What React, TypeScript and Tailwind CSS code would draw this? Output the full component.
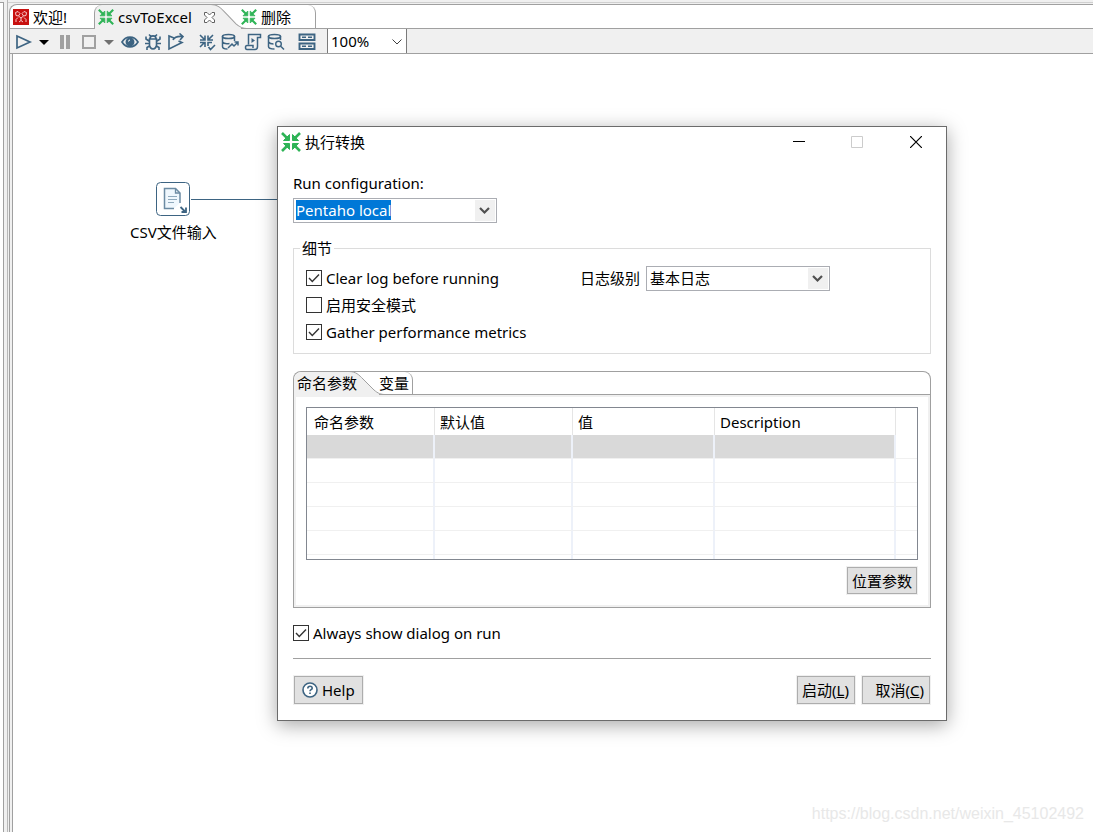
import { useState } from 'react';
import type { ReactNode } from 'react';

const COLUMNS = ['命名参数', '默认值', '值', 'Description'];
const ROWS = [0, 1, 2, 3, 4];

function TransIcon({ className, color = '#2fb457' }: { className: string; color?: string }) {
  return (
    <svg viewBox="0 0 20 20" className={className} fill={color} stroke={color} strokeWidth="2.600" aria-hidden="true">
      <path d="M1 1l6 6M19 1l-6 6M1 19l6-6M19 19l-6-6" fill="none" />
      <path d="M8.500 2.500v6h-6zM11.500 2.500v6h6zM8.500 17.500v-6h-6zM11.500 17.500v-6h6z" strokeWidth="1" />
    </svg>
  );
}

function Icon({ children }: { children: ReactNode }) {
  return (
    <svg viewBox="0 0 18 18" className="size-[18px]" fill="none" stroke="#3d6482" strokeWidth="1.7" aria-hidden="true">
      {children}
    </svg>
  );
}

function ToolButton({ label, className = 'w-[23px]', children }: { label: string; className?: string; children: ReactNode }) {
  return (
    <button type="button" aria-label={label} className={`flex h-6 shrink-0 items-center justify-center pt-0.5 ${className}`}>
      {children}
    </button>
  );
}

// sloped right edge of the selected tab
function TabCurve({ className }: { className: string }) {
  return (
    <svg viewBox="0 0 36 24" preserveAspectRatio="none" className={`-mt-px w-9 shrink-0 ${className}`} aria-hidden="true">
      <path d="M0 0H36V24H0z" fill="#f0f0f0" />
      <path d="M0 .5C7 .5 10 4 14 8L25 19C29 22.500 32 23.500 36 23.500V0H0z" fill="#fff" />
      <path d="M0 .5H36M0 .5C7 .5 10 4 14 8L25 19C29 22.500 32 23.500 36 23.500" fill="none" stroke="#a0a0a0" />
    </svg>
  );
}

function Check({ label, defaultChecked = false }: { label: string; defaultChecked?: boolean }) {
  return (
    <label className="flex w-fit items-center gap-1 leading-5">
      <span className="grid size-4 shrink-0">
        <input
          type="checkbox"
          defaultChecked={defaultChecked}
          className="peer col-start-1 row-start-1 size-4 appearance-none border border-[#333] bg-white"
        />
        <svg
          viewBox="0 0 16 16"
          className="pointer-events-none invisible col-start-1 row-start-1 size-4 peer-checked:visible"
          fill="none"
          stroke="#333"
          strokeWidth="1.4"
          aria-hidden="true"
        >
          <path d="M3 8l3.300 3.500L13 4.500" />
        </svg>
      </span>
      {label}
    </label>
  );
}

function Chevron() {
  return (
    <svg viewBox="0 0 20 21" className="h-[21px] w-5 bg-[#f0f0f0]" fill="none" stroke="#505050" strokeWidth="2.200" aria-hidden="true">
      <path d="M5 8l4.500 4.500L14 8" />
    </svg>
  );
}

function PushButton({ className, children, onClick }: { className: string; children: ReactNode; onClick?: () => void }) {
  return (
    <button
      type="button"
      onClick={onClick}
      className={`flex items-center border border-[#adadad] bg-[#e1e1e1] leading-5 whitespace-nowrap outline outline-[#f0f0f0] ${className}`}
    >
      {children}
    </button>
  );
}

function EditorTabs() {
  return (
    <div role="tablist" className="flex h-[25px] rounded-tl-lg border-t border-l border-[#a0a0a0] bg-white leading-5">
      <button role="tab" type="button" className="flex w-[84px] shrink-0 items-center gap-1 border-b border-[#a0a0a0] pl-[3px]">
        <svg viewBox="0 0 16 16" className="size-4" fill="none" stroke="#f7c9c9" strokeWidth="1" aria-hidden="true">
          <path d="M0 0h16v16H0z" fill="#c8100f" stroke="none" />
          <path d="M2.500 3.500L5 2.500l2 2-1.500 2.500-2.500-.5zM13.500 3.500L11 2.500l-2 2 1.500 2.500 2.500-.5zM5.500 7L8 9l2.500-2M8 9v2.500M5 8.500l-2 2v2.500M11 8.500l2 2v2.500M6 13l2-1.500L10 13" />
        </svg>
        欢迎!
      </button>
      <div role="tab" aria-selected="true" className="flex shrink-0 items-center rounded-tl-lg border-l border-[#a0a0a0] bg-[#f0f0f0] pl-[3px]">
        <TransIcon className="mr-1 size-4" />
        csvToExcel
        <button type="button" aria-label="Close" className="relative z-10 ml-3">
          <svg viewBox="0 0 11 11" className="size-[11px]" fill="#fff" stroke="#606060" strokeWidth="1" aria-hidden="true">
            <path d="M.5 .5h2.500L5.500 3 8 .5h2.500V3L8 5.500 10.500 8v2.500H8L5.500 8 3 10.500H.5V8L3 5.500.5 3z" />
          </svg>
        </button>
      </div>
      <TabCurve className="-ml-1 h-[25px]" />
      <button role="tab" type="button" className="-ml-1.5 flex shrink-0 items-center gap-1 rounded-tr-lg border-r border-b border-[#a0a0a0] pr-6">
        <TransIcon className="size-4" />
        删除
      </button>
      <div className="flex-1 border-b border-[#a0a0a0]" />
    </div>
  );
}

function Toolbar() {
  return (
    <div role="toolbar" className="flex h-[25px] items-center border-b border-[#a0a0a0] pl-[3px]">
      <ToolButton label="Run" className="w-[22px]">
        <Icon><path d="M2 3l13 6-13 6z" /></Icon>
      </ToolButton>
      <ToolButton label="Run options" className="w-[18px]">
        <svg viewBox="0 0 10 5" className="h-[5px] w-2.5" aria-hidden="true"><path d="M0 0h10L5 5z" /></svg>
      </ToolButton>
      <ToolButton label="Pause" className="w-6">
        <svg viewBox="0 0 10 14" className="h-3.5 w-2.5" fill="#a0a0a0" aria-hidden="true"><path d="M0 0h4v14H0zM6 0h4v14H6z" /></svg>
      </ToolButton>
      <ToolButton label="Stop" className="w-6">
        <svg viewBox="0 0 14 14" className="size-3.5" fill="none" stroke="#a0a0a0" strokeWidth="2" aria-hidden="true"><path d="M1 1h12v12H1z" /></svg>
      </ToolButton>
      <ToolButton label="Stop options" className="w-4">
        <svg viewBox="0 0 10 5" className="h-[5px] w-2.5" fill="#707070" aria-hidden="true"><path d="M0 0h10L5 5z" /></svg>
      </ToolButton>
      <ToolButton label="Preview" className="ml-px w-[23px]">
        <Icon>
          <path d="M1 9c4-6.500 12-6.500 16 0-4 6.500-12 6.500-16 0z" />
          <circle cx="9" cy="9" r="3.600" fill="#3d6482" />
          <path d="M7.500 8.500q0-1.500 1.500-1.500" stroke="#fff" strokeWidth="1" />
        </Icon>
      </ToolButton>
      <ToolButton label="Debug">
        <Icon>
          <path d="M5.500 6h7v6.500Q12 15.500 9 16q-3-.5-3.500-3.500zM6 5.500C6 2 12 2 12 5.500M5 1.500l2 2M13 1.500l-2 2M5 8L2 6V3.500M13 8l3-2V3.500M5 10.500H1M13 10.500h4M5.500 13L3 14.500V17M12.500 13l2.500 1.500V17" strokeWidth="1.600" />
        </Icon>
      </ToolButton>
      <ToolButton label="Replay">
        <Icon>
          <path d="M7 5L2 3v13l13-6.500L11.500 8M6 7c1.500-3 4-4 9.500-3.500M12.500.5l3.500 3L13 7" strokeWidth="1.600" />
        </Icon>
      </ToolButton>
      <ToolButton label="Verify" className="ml-2 w-[23px]">
        <Icon>
          <path d="M2 2l4.500 4.500M15 2l-4.500 4.500M2 14l4.500-4.500M7 2.500V7H2M10 2.500V7h5M7 14V9.500H2M10 13V9.500h4M10.500 14l2 2.500 4.500-4.500" strokeWidth="1.600" />
        </Icon>
      </ToolButton>
      <ToolButton label="Impact">
        <Icon>
          <ellipse cx="7.500" cy="3.500" rx="6" ry="2" />
          <path d="M1.500 3.500v10c0 1.500 2 2.500 5 2.500M13.500 3.500V8M1.500 9c1 1.500 4 2 7 1.500M7 15l4-4 2 2 4-4M13.500 9H17v3.500" strokeWidth="1.500" />
        </Icon>
      </ToolButton>
      <ToolButton label="SQL">
        <Icon>
          <path d="M4.500 11.500v-10h12v3h-3v9c0 2-1 3-2.500 3H3c-2 0-2-4 0-4h6v2.500" strokeWidth="1.500" />
          <path d="M7.500 5l3.500 2.500-3.500 2.500z" fill="#3d6482" stroke="none" />
        </Icon>
      </ToolButton>
      <ToolButton label="Explore database">
        <Icon>
          <ellipse cx="7.500" cy="3.500" rx="6" ry="2" />
          <path d="M1.500 3.500v10c0 1.500 2 2.500 6 2.500M13.500 3.500V7M1.500 9c1 1.500 3 2 5 2M14 13.500l3 3" strokeWidth="1.500" />
          <circle cx="11.500" cy="11" r="2.800" strokeWidth="1.400" />
        </Icon>
      </ToolButton>
      <ToolButton label="Show results" className="ml-2 w-[23px]">
        <Icon>
          <path d="M1.500 1.500h15v5.500h-15zM1.500 10.500h15v5.500h-15z" strokeWidth="1.900" />
          <path d="M4 4.300h4M10 4.300h4M4 13.300h4M10 13.300h4" strokeWidth="1.400" />
        </Icon>
      </ToolButton>
      <div className="ml-[9px] grid h-6 w-20 items-center border-x border-[#7a7a7a] bg-white">
        <select aria-label="Zoom" className="col-start-1 row-start-1 h-6 appearance-none pl-[3px] leading-5">
          <option>100%</option>
        </select>
        <svg viewBox="0 0 10 6" className="pointer-events-none col-start-1 row-start-1 mt-0.5 mr-1 h-1.5 w-2.5 justify-self-end" fill="none" stroke="#404040" aria-hidden="true">
          <path d="M.5 .5L5 5 9.500.5" />
        </svg>
      </div>
    </div>
  );
}

function Canvas() {
  return (
    <div className="relative ml-0.5 flex-1 border-l border-[#a0a0a0] bg-white">
      <div className="absolute top-[145px] left-[178px] h-px w-[200px] bg-[#3d6482]" />
      <div className="absolute top-32 left-[117px] flex flex-col items-center gap-1.5">
        <svg viewBox="0 0 34 34" className="size-[34px]" fill="none" stroke="#3d6482" aria-hidden="true">
          <rect x=".5" y=".5" width="33" height="33" rx="4" fill="#fff" />
          <path d="M18 26.500H8.500v-20h11L24 11v10" fill="#eff7fd" stroke="#6c8ba3" strokeWidth="1.500" />
          <path d="M19.500 6.500V11H24" stroke="#6c8ba3" strokeWidth="1.300" />
          <path d="M12 14.500h9M12 17.500h9M12 20.500h6" stroke="#8fa9bc" />
          <path d="M24.500 25l5 5M30 25.500V30h-4.500" strokeWidth="1.800" />
        </svg>
        <span className="leading-5">CSV文件输入</span>
      </div>
      <span className="absolute right-[9px] bottom-2 font-['Liberation_Sans',Arial,sans-serif] text-base leading-5 text-[#e8e8e8]">
        https://blog.csdn.net/weixin_45102492
      </span>
    </div>
  );
}

function ParameterTable() {
  return (
    <div className="border border-[#828790] bg-white">
      <table className="w-full table-fixed border-separate border-spacing-0 text-left">
        <colgroup>
          <col className="w-[128px]" />
          <col className="w-[138px]" />
          <col className="w-[142px]" />
          <col className="w-[181px]" />
          <col />
        </colgroup>
        <thead>
          <tr className="h-[27px]">
            {COLUMNS.map((name) => (
              <th key={name} scope="col" className="border-r border-[#e5e5e5] p-0 pl-[5px] leading-5 font-normal first:pl-[7px]">{name}</th>
            ))}
            <td className="p-0" />
          </tr>
        </thead>
        <tbody>
          {ROWS.map((row) => (
            <tr key={row} className="h-6">
              {COLUMNS.map((name) => (
                <td
                  key={name}
                  className={`border-r-2 border-b border-r-[#edf1f9] border-b-[#f0f0f0] p-0 ${row === 0 ? 'bg-[#d9d9d9]' : ''}`}
                />
              ))}
              <td className="border-b border-[#f0f0f0] p-0" />
            </tr>
          ))}
          <tr className="h-1">
            {COLUMNS.map((name) => (
              <td key={name} className="border-r-2 border-[#edf1f9] p-0" />
            ))}
            <td className="p-0" />
          </tr>
        </tbody>
      </table>
    </div>
  );
}

function RunDialog() {
  const [config, setConfig] = useState('Pentaho local');

  return (
    <div
      role="dialog"
      aria-label="执行转换"
      className="absolute top-[126px] left-[277px] z-20 w-[670px] border border-[#6b6b6b] bg-white shadow-[0_4px_18px_rgba(0,0,0,0.35)]"
    >
      <header className="flex h-[30px] items-center pl-[3px] leading-5">
        <TransIcon className="mr-1 size-5" />
        <h1>执行转换</h1>
        <div className="ml-auto flex">
          <button type="button" aria-label="Minimize" className="flex h-[30px] w-[58px] items-center justify-center">
            <svg viewBox="0 0 12 12" className="size-3" stroke="#000" aria-hidden="true"><path d="M0 5.500h12" /></svg>
          </button>
          <button type="button" aria-label="Maximize" disabled className="flex h-[30px] w-[58px] items-center justify-center">
            <svg viewBox="0 0 12 12" className="size-3" fill="none" stroke="#ccc" aria-hidden="true"><path d="M.5 .5h11v11H.5z" /></svg>
          </button>
          <button type="button" aria-label="Close" className="flex h-[30px] w-[60px] items-center justify-center">
            <svg viewBox="0 0 12 12" className="size-3" stroke="#000" strokeWidth="1.200" aria-hidden="true"><path d="M0 0l12 12M12 0L0 12" /></svg>
          </button>
        </div>
      </header>

      <form className="px-[15px] py-4">
        <label htmlFor="run-config" className="block leading-5">Run configuration:</label>
        <div className="mt-[5px] flex h-[25px] w-[204px] items-start justify-between border border-[#abadb3] p-px">
          <input
            id="run-config"
            value={config}
            onChange={(e) => setConfig(e.target.value)}
            className="ml-px field-sizing-content h-5 bg-[#0078d7] leading-5 text-white outline-none"
          />
          <button type="button" aria-label="Show configurations"><Chevron /></button>
        </div>

        <fieldset className="mt-3.5 flex border border-[#dcdcdc] px-3 pt-[5px] pb-2">
          <legend className="-ml-1.5 px-0.5 leading-[22px]">细节</legend>
          <div className="grid w-[274px] auto-rows-[27px] items-center">
            <Check label="Clear log before running" defaultChecked />
            <Check label="启用安全模式" />
            <Check label="Gather performance metrics" defaultChecked />
          </div>
          <div className="flex h-7 items-center gap-1.5">
            <label htmlFor="log-level" className="leading-5">日志级别</label>
            <div className="grid w-[184px] items-center">
              <select id="log-level" className="col-start-1 row-start-1 h-[25px] appearance-none border border-[#abadb3] bg-white pb-px pl-[3px] leading-5">
                <option>基本日志</option>
              </select>
              <span className="pointer-events-none col-start-1 row-start-1 mr-0.5 justify-self-end"><Chevron /></span>
            </div>
          </div>
        </fieldset>

        <section className="mt-[17px]">
          <div role="tablist" className="flex h-6 rounded-t-lg border-x border-t border-[#a0a0a0] bg-white leading-5">
            <button role="tab" type="button" aria-selected="true" className="shrink-0 rounded-tl-lg bg-[#f0f0f0] pb-0.5 pl-[3px]">
              <span className="relative z-10">命名参数</span>
            </button>
            <TabCurve className="-ml-2 h-6" />
            <button role="tab" type="button" className="-ml-1.5 shrink-0 rounded-tr-lg border-r border-b border-[#a0a0a0] pr-[3px] pb-px">变量</button>
            <div className="flex-1 border-b border-[#a0a0a0]" />
          </div>
          <div className="border-x border-b border-[#a0a0a0]">
            <div className="border-2 border-[#f0f0f0] p-2.5">
              <ParameterTable />
              <PushButton className="mt-[7px] mr-px mb-px ml-auto h-[27px] px-1">位置参数</PushButton>
            </div>
          </div>
        </section>

        <div className="mt-[15px]">
          <Check label="Always show dialog on run" defaultChecked />
        </div>
        <hr className="mt-[15px] border-[#a0a0a0]" />

        <div className="mt-[17px] flex gap-[7px] px-px">
          <PushButton className="mr-auto h-7 gap-1 px-[7px]">
            <svg viewBox="0 0 16 16" className="size-4" fill="none" stroke="#3d6482" strokeWidth="1.600" aria-hidden="true">
              <circle cx="8" cy="8" r="7" fill="#fff" />
              <path d="M5.800 6.500c0-3 4.400-3 4.400-.3 0 1.500-2.200 1.500-2.200 3M8 10.500v1.600" />
            </svg>
            Help
          </PushButton>
          <PushButton className="h-7 w-[58px] pl-1"><span>启动(<u>L</u>)</span></PushButton>
          <PushButton className="h-7 w-[68px] justify-end pr-[5px]"><span>取消(<u>C</u>)</span></PushButton>
        </div>
      </form>
    </div>
  );
}

export default function App() {
  return (
    <div className="relative flex min-h-screen overflow-hidden bg-[#f0f0f0] font-['Noto_Sans','Noto_Sans_CJK_SC',sans-serif] text-[15px] text-black">
      <aside className="mt-0.5 w-1 shrink-0 border-t border-r border-[#a0a0a0] bg-white" />
      <main className="ml-[3px] flex min-w-0 flex-1 flex-col border-l border-[#b8b8b8] pt-0.5">
        <div className="flex flex-1 flex-col border-t border-[#d0d0d0] pl-px">
          <div className="flex flex-1 flex-col pt-px">
            <EditorTabs />
            <div className="flex flex-1 flex-col border-l border-[#a0a0a0]">
              <Toolbar />
              <Canvas />
            </div>
          </div>
        </div>
      </main>
      <RunDialog />
    </div>
  );
}
